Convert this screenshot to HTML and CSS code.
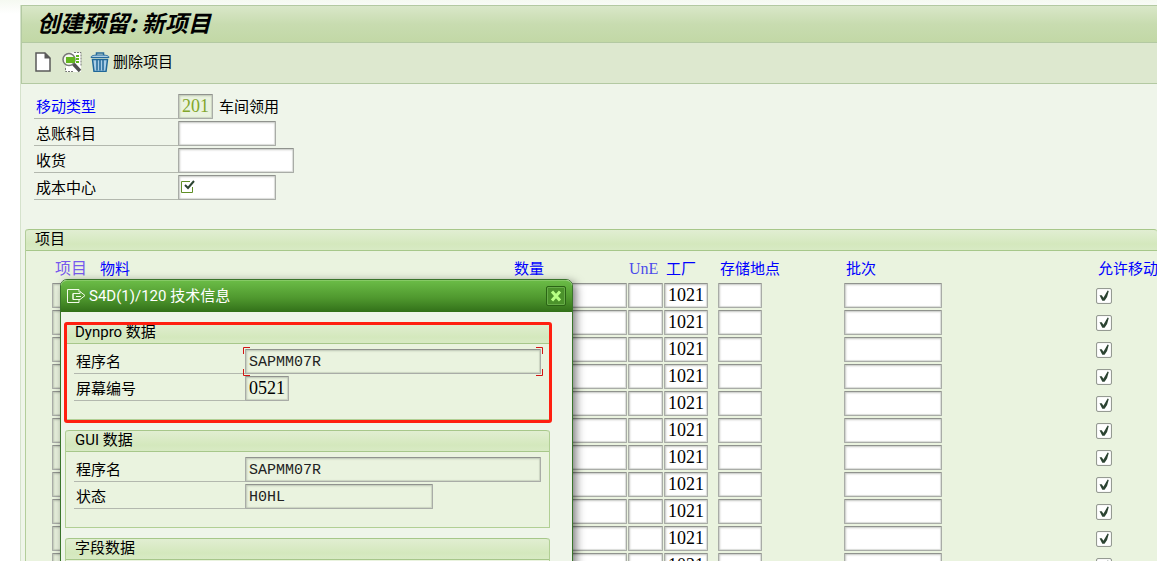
FILE: index.html
```html
<!DOCTYPE html>
<html lang="zh-CN">
<head>
<meta charset="utf-8">
<title>创建预留: 新项目</title>
<link rel="stylesheet" href="styles.css">
</head>
<body>
<div class="app">
  <main class="window">
    <h1 class="title">创建预留: 新项目</h1>
    <div class="toolbar">
      <button class="tool" type="button" aria-label="新建">
        <svg width="16" height="20" viewBox="0 0 16 20"><path d="M1 1h9l5 5v13H1z" fill="#fff" stroke="#5a5a5a" stroke-width="1.5"/><path d="M9.500 0.500 15.500 6.500H9.500z" fill="#5a5a5a"/></svg>
      </button>
      <button class="tool" type="button" aria-label="概览">
        <svg width="20" height="21" viewBox="0 0 20 21"><path d="M9 .5h10V20H4v-6z" fill="#fff"/><path d="M14 4h3M14 7h3M14 10h3" stroke="#5fb51c" stroke-width="2"/><path d="M12 .5h7V14M3.500 16v3.500H12" fill="none" stroke="#777" stroke-dasharray="2 1"/><circle cx="7" cy="7.500" r="6" fill="#f5f8ef" stroke="#777" stroke-width="1.500"/><path d="M4 5h9v6H4z" fill="#63b51f"/><path d="m11.500 12 6.500 7" stroke="#4f4f4f" stroke-width="3.500"/></svg>
      </button>
      <button class="tool" type="button">
        <svg width="20" height="20" viewBox="0 0 20 20"><path d="M6.500 3V1h7v2" fill="none" stroke="#276b9b" stroke-width="1.500"/><path d="M1 5.500C1 3.500 4 3 10 3s9 .5 9 2.500z" fill="#a9cde6" stroke="#276b9b"/><path d="M2.500 7.500h15L16 19.500H4z" fill="#a9cde6" stroke="#1f6798" stroke-width="1.500"/><path d="M7 8v10.500M10 8v10.500M13 8v10.500" stroke="#1f6798" stroke-width="1.500"/></svg>
        <span>删除项目</span>
      </button>
    </div>

    <form class="form">
      <div class="row"><label class="label link" for="mv">移动类型</label><input class="field w35 readonly move" id="mv" value="201" readonly><span class="note">车间领用</span></div>
      <div class="row"><label class="label" for="gl">总账科目</label><input class="field w98" id="gl"></div>
      <div class="row"><label class="label" for="gr">收货</label><input class="field w116" id="gr"></div>
      <div class="row"><label class="label" for="cc">成本中心</label><span class="required"><input class="field w98" id="cc"><svg class="required-mark" width="14" height="13" viewBox="0 0 14 13"><path d="M9 1.500H.5v11h11V7" fill="none" stroke="#5f8f25"/><path d="m4 5 3 3 6-7" fill="none" stroke="#2c4432" stroke-width="2"/></svg></span></div>
    </form>

    <section class="items">
      <h2 class="group-head">项目</h2>
      <table class="grid">
        <colgroup><col class="c-item"><col class="c-material"><col class="c-qty"><col class="c-unit"><col class="c-plant"><col class="c-sloc"><col class="c-batch"><col></colgroup>
        <thead><tr><th class="key">项目</th><th>物料</th><th class="qty">数量</th><th class="unit">UnE</th><th>工厂</th><th>存储地点</th><th>批次</th><th>允许移动</th></tr></thead>
        <tbody id="rows"></tbody>
      </table>
    </section>
  </main>

  <div class="dialog" role="dialog" aria-labelledby="dialog-title">
    <div class="dialog-head">
      <svg width="19" height="14" viewBox="0 0 19 14"><path d="M12 3V.5H.5v13H12V11M6 4.500h7V2.500L18 6.500l-5 4h-7zM6 4.500v6M9 7.500h5" fill="none" stroke="#f2fbea"/></svg>
      <h2 class="dialog-title" id="dialog-title">S4D(1)/120 技术信息</h2>
      <button class="close" type="button" aria-label="关闭"><svg width="12" height="12" viewBox="0 0 12 12"><path d="m2 1.500 8 9M10 1.500l-8 9" stroke="#b7ff83" stroke-width="3"/></svg></button>
    </div>
    <div class="dialog-body">
      <section class="group marked">
        <h3 class="group-head">Dynpro 数据</h3>
        <div class="group-rows">
          <div class="row"><label class="label" for="p1">程序名</label><span class="focus"><input class="field w296 readonly code" id="p1" value="SAPMM07R" readonly><svg class="corners left" width="7" height="29" viewBox="0 0 7 29"><path d="M7 .5H.5V7M.5 22v6.500H7" fill="none" stroke="#d21414"/></svg><svg class="corners right" width="7" height="29" viewBox="0 0 7 29"><path d="M0 .5h6.500V7M6.500 22v6.500H0" fill="none" stroke="#d21414"/></svg></span></div>
          <div class="row"><label class="label" for="s1">屏幕编号</label><input class="field w44 readonly" id="s1" value="0521" readonly></div>
        </div>
      </section>
      <section class="group">
        <h3 class="group-head">GUI 数据</h3>
        <div class="group-rows">
          <div class="row"><label class="label" for="p2">程序名</label><input class="field w296 readonly code" id="p2" value="SAPMM07R" readonly></div>
          <div class="row"><label class="label" for="s2">状态</label><input class="field w188 readonly code" id="s2" value="H0HL" readonly></div>
        </div>
      </section>
      <section class="group">
        <h3 class="group-head">字段数据</h3>
        <div class="group-rows"></div>
      </section>
    </div>
  </div>
</div>
<script src="script.js"></script>
</body>
</html>
```
FILE: styles.css
```css
* { box-sizing: border-box; }

body {
  margin: 0;
  background: #fff;
  color: #000;
  font: 15px/20px Roboto, "Noto Sans CJK SC", sans-serif;
}

h1, h2, h3 { margin: 0; font-weight: 400; }
button, input { font: inherit; color: inherit; }
button { padding: 0; border: 0; background: none; }

.app {
  position: relative;
  height: 100vh;
  overflow: hidden;
  padding: 5px 0 0 20px;
  background: linear-gradient(#f5f9f1, #fff 14px);
}

.window {
  min-height: 100%;
  border-left: 1px solid #d5e2cc;
  background: #eff5ea;
}

.title {
  height: 38px;
  padding: 0 15px;
  border: 1px solid #b3c9a2;
  border-right: 0;
  background: linear-gradient(#d9e7c8, #c8dcb0 50%, #c2d8a6);
  font: italic 700 23px/32px "Noto Sans CJK SC", sans-serif;
}

.toolbar {
  display: flex;
  align-items: center;
  gap: 11px;
  height: 41px;
  padding: 0 13px 2px;
  border: solid #b3c9a2;
  border-width: 0 0 1px 1px;
  background: #dde8cf;
}

.tool { display: flex; align-items: center; gap: 3px; }
.tool + .tool + .tool { margin-left: -3px; }

.form {
  display: flex;
  flex-direction: column;
  gap: 2px;
  padding: 10px 13px 29px;
}

.row { display: flex; height: 25px; }

.label {
  width: 144px;
  padding: 3px 2px 0;
  border-bottom: 1px solid #b3b8ae;
}

.link { color: #00f; }
.note { padding: 3px 6px 0; }

.field {
  display: block;
  height: 25px;
  padding: 1px 3px;
  border: 1px solid #a9aca7;
  border-top-color: #90938e;
  border-radius: 1px;
  background: #fff;
  box-shadow: inset 1px 1px 2px #c4c6c2, inset -1px -1px 1px #dcdedb;
  outline: 0;
  font: 18px/21px "Liberation Serif", serif;
}

.readonly {
  background: #eaf3df;
  box-shadow: inset 1px 1px 2px #bcc4b4, inset -1px -1px 1px #cdd5c4;
}

.move { color: #82a62b; }
.code { padding-top: 3px; color: #222; font: 15px/20px "Liberation Mono", monospace; }

.w35 { width: 35px; }
.w44 { width: 44px; }
.w98 { width: 98px; }
.w116 { width: 116px; }
.w188 { width: 188px; }
.w296 { width: 296px; }
.full { width: 100%; }

.required, .focus { position: relative; }
.required-mark { position: absolute; left: 3px; top: 5px; }
.corners { position: absolute; top: -2px; }
.corners.left { left: -2px; }
.corners.right { right: -2px; }

.items {
  margin-left: 4px;
  border-left: 1px solid #b3cd9b;
  border-radius: 3px 0 0;
  background: #eaf3df;
}

.group-head {
  height: 22px;
  padding: 0 9px;
  border: solid #a7c78a;
  border-width: 1px 0;
  border-radius: 3px 3px 0 0;
  background: linear-gradient(#e1eed2, #d4e8bd 70%, #d8eac4);
  font-size: 15px;
  line-height: 19px;
}

.grid {
  width: calc(100% - 26px);
  margin-left: 26px;
  border-collapse: collapse;
  table-layout: fixed;
}

.c-item { width: 46px; }
.c-material { width: 412px; }
.c-qty { width: 118px; }
.c-unit { width: 36px; }
.c-plant { width: 54px; }
.c-sloc { width: 126px; }
.c-batch { width: 252px; }

th {
  height: 32px;
  padding: 3px 2px 0;
  color: #00f;
  font-weight: 400;
  text-align: left;
  white-space: nowrap;
}

th.key { padding-left: 3px; color: #7759ed; font-size: 16px; }
th.qty { padding-left: 4px; }
th.unit { padding: 3px 1px 0; color: #4b4bea; font: 16px/20px "Liberation Serif", serif; }

td { height: 27px; padding: 0 1px 2px 0; }

.check {
  display: block;
  appearance: none;
  width: 16px;
  height: 16px;
  margin: 0;
  border: 1px solid #959a92;
  border-radius: 2px;
  background: #fff;
  box-shadow: inset 0 0 1px #aaa;
}

.check:checked::before {
  content: "";
  display: block;
  height: 14px;
  background: #2c4432;
  clip-path: polygon(18% 48%, 34% 48%, 46% 66%, 76% 14%, 84% 18%, 72% 60%, 54% 88%, 38% 88%);
}

.dialog {
  position: absolute;
  left: 60px;
  top: 279px;
  width: 513px;
  border: 1px solid #39742a;
  border-radius: 7px 7px 0 0;
  background: #eff5ea;
  box-shadow: 3px 3px 10px #0008;
}

.dialog-head {
  display: flex;
  align-items: center;
  gap: 3px;
  height: 32px;
  padding: 0 6px 2px;
  border-top: 1px solid #86c966;
  border-radius: 6px 6px 0 0;
  background: linear-gradient(#6abb46, #4f982e 55%, #327019);
  color: #fff;
}

.dialog-title { flex: 1; font-size: 15px; line-height: 28px; }

.close {
  display: grid;
  place-items: center;
  width: 20px;
  height: 20px;
  border: 1px solid #2b6415;
  border-radius: 2px;
  background: #4b922b;
  box-shadow: inset 0 0 0 1px #68ad49;
}

.dialog-body {
  display: flex;
  flex-direction: column;
  gap: 10px;
  padding: 10px 22px 10px 4px;
}

.group {
  position: relative;
  min-height: 98px;
  border: solid #b1cf94;
  border-width: 0 1px 1px;
  border-radius: 3px 3px 0 0;
  background: #eaf3df;
}

.marked::after {
  content: "";
  position: absolute;
  inset: 0 -3px -4px -2px;
  border: 3px solid #ff1f10;
  border-radius: 3px;
}

.group-rows {
  display: flex;
  flex-direction: column;
  gap: 2px;
  padding: 5px 8px;
}

.group-rows .label { width: 171px; }
```
FILE: script.js
```js
const rows = document.getElementById("rows");
const field = (label, cls, value = "") =>
  `<td><input class="field ${cls}" aria-label="${label}" value="${value}"></td>`;

for (let i = 0; i < 12; i++) {
  rows.insertAdjacentHTML("beforeend", `<tr>
    ${field("项目", "w44 readonly")}
    ${field("物料", "full")}
    ${field("数量", "full")}
    ${field("单位", "full")}
    ${field("工厂", "w44", "1021")}
    ${field("存储地点", "w44")}
    ${field("批次", "w98")}
    <td><input class="check" type="checkbox" aria-label="允许移动" checked></td>
  </tr>`);
}
```
